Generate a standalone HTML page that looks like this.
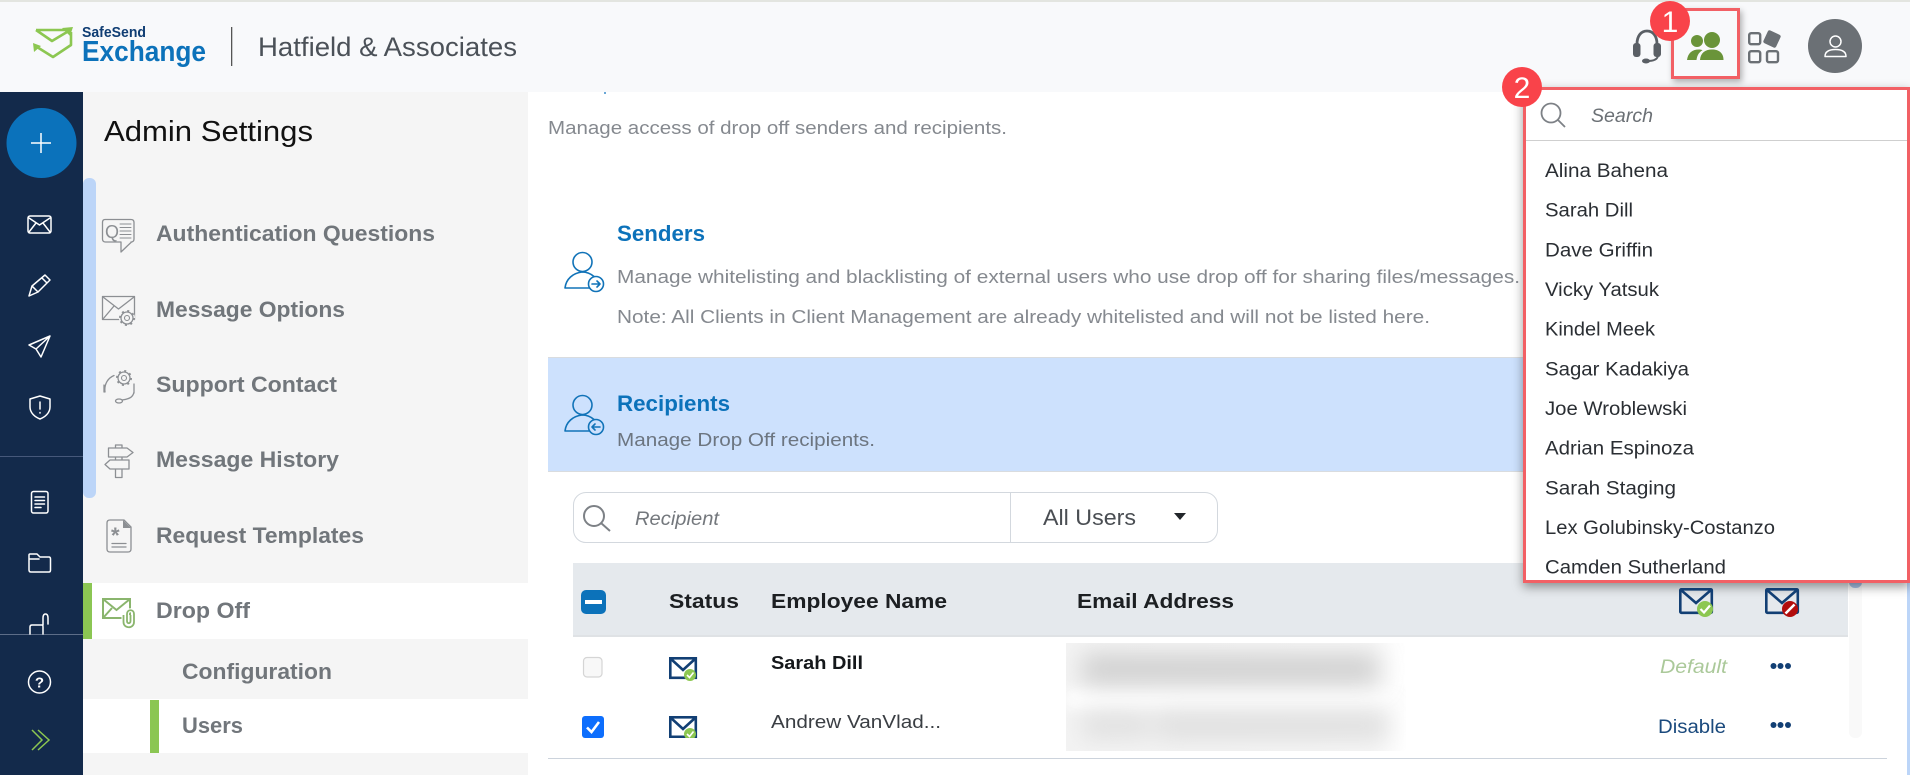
<!DOCTYPE html>
<html lang="en"><head><meta charset="utf-8"><title>Admin Settings</title>
<style>
html,body{margin:0;padding:0;width:1910px;height:775px;overflow:hidden;background:#fff}
.b{position:absolute;display:block}
svg{position:absolute;left:0;top:0}
text{font-family:"Liberation Sans",sans-serif;white-space:pre}
.nav{font-size:22px;font-weight:700;fill:#71767b}
.desc{font-size:18.5px;fill:#85898f}
.th{font-size:20.5px;font-weight:700;fill:#1c1f22}
.name{font-size:19px;fill:#2a2e33}
.ic{fill:none;stroke:#8c8f93;stroke-width:1.3;stroke-linejoin:round;stroke-linecap:round}
.w{fill:none;stroke:#fff;stroke-width:1.5;stroke-linejoin:round;stroke-linecap:round}
.bl{fill:none;stroke:#1173b8;stroke-width:1.6;stroke-linecap:round;stroke-linejoin:round}
.nv{fill:none;stroke:#123f74;stroke-width:2.6}
</style></head><body>
<div class="b" style="left:0;top:0;width:1910px;height:92px;background:#f8f9fb"></div>
<div class="b" style="left:0;top:0;width:1910px;height:2px;background:#e3e5e0"></div>
<div class="b" style="left:0;top:92px;width:83px;height:683px;background:#132a4b"></div>
<div class="b" style="left:83px;top:92px;width:445px;height:683px;background:#f5f5f5"></div>
<div class="b" style="left:83px;top:178px;width:13px;height:320px;background:#bcd5f8;border-radius:6px"></div>
<div class="b" style="left:83px;top:583px;width:445px;height:56px;background:#fff"></div>
<div class="b" style="left:83px;top:583px;width:9px;height:56px;background:#8bc653"></div>
<div class="b" style="left:83px;top:699px;width:445px;height:54px;background:#fff"></div>
<div class="b" style="left:150px;top:700px;width:9px;height:53px;background:#8bc653"></div>
<div class="b" style="left:0;top:456px;width:83px;height:1px;background:#46587a"></div>
<div class="b" style="left:0;top:634px;width:83px;height:1px;background:#5d6d88"></div>
<div class="b" style="left:548px;top:357px;width:980px;height:115px;box-sizing:border-box;background:#cde1fd;border-top:1px solid #d9dcdf;border-bottom:1px solid #d9dcdf"></div>
<div class="b" style="left:573px;top:492px;width:645px;height:51px;box-sizing:border-box;border:1.5px solid #d3d8de;border-radius:13px;background:#fff"></div>
<div class="b" style="left:1010px;top:492px;width:1px;height:51px;background:#d3d8de"></div>
<div class="b" style="left:573px;top:563px;width:1275px;height:74px;box-sizing:border-box;background:#e5e9ed;border-bottom:2px solid #dfe2e5"></div>
<div class="b" style="left:548px;top:758px;width:1339px;height:1px;background:#ccd3dc"></div>
<div class="b" style="left:1849px;top:570px;width:13px;height:168px;background:#f9f9f9;border-radius:6px"></div>
<div class="b" style="left:1849px;top:570px;width:13px;height:18px;background:#a9c3e8;border-radius:6px"></div>
<div class="b" style="left:1907px;top:575px;width:3px;height:200px;background:#bcd5f8"></div>
<div class="b" style="left:1523px;top:87px;width:387px;height:496px;box-sizing:border-box;background:#fff;border:3px solid #f26065;box-shadow:0 4px 10px rgba(0,0,0,.4)"></div>
<div class="b" style="left:1526px;top:140px;width:381px;height:1px;background:#cfcfcf"></div>
<div class="b" style="left:1671px;top:8px;width:69px;height:71px;box-sizing:border-box;border:3px solid #f26065;box-shadow:2px 3px 6px rgba(0,0,0,.3)"></div>

<svg width="1910" height="775" viewBox="0 0 1910 775" xmlns="http://www.w3.org/2000/svg">
<defs>
<filter id="bl" filterUnits="userSpaceOnUse" x="1000" y="600" width="480" height="175"><feGaussianBlur stdDeviation="12"/></filter>
<filter id="bl2" filterUnits="userSpaceOnUse" x="1000" y="600" width="480" height="175"><feGaussianBlur stdDeviation="5"/></filter>
<clipPath id="cb"><rect x="1066" y="643" width="340" height="108"/></clipPath>
<clipPath id="cr"><rect x="660" y="700" width="50" height="38"/></clipPath>
<linearGradient id="gb" x1="0" x2="1" y1="0" y2="0"><stop offset="0" stop-color="#f3f3f3"/><stop offset=".9" stop-color="#f7f7f7"/><stop offset="1" stop-color="#fff"/></linearGradient>
</defs>

<!-- logo -->
<g fill="none" stroke="#8cc751" stroke-width="2.600" stroke-linejoin="round">
<path d="M36 30H66M36 30L52 41L67 32"/><path d="M71 32V45L53 57L37 47"/></g>
<path d="M73 27L62 28L70 36Z" fill="#8cc751"/><path d="M33 43L34 52L41 46Z" fill="#8cc751"/>
<text x="82" y="37" font-size="15" font-weight="700" fill="#0f3d73" textLength="64" lengthAdjust="spacingAndGlyphs">SafeSend</text>
<text x="82" y="61" font-size="29" font-weight="700" fill="#0c72ba" textLength="124" lengthAdjust="spacingAndGlyphs">Exchange</text>
<rect x="231" y="27" width="1.300" height="39" fill="#555"/>
<text x="258" y="56" font-size="27" fill="#4b5158" textLength="259" lengthAdjust="spacingAndGlyphs">Hatfield &amp; Associates</text>

<!-- header icons -->
<g fill="none" stroke="#5a5f65" stroke-width="2.800"><path d="M1637 46V44C1637 36 1641 31 1647 31C1653 31 1657 36 1657 44V46"/><path d="M1658 55C1658 59 1654 61 1648 61" stroke-width="2"/></g>
<g fill="#5a5f65"><rect x="1633" y="43" width="7.500" height="14" rx="3"/><rect x="1653.500" y="43" width="7.500" height="14" rx="3"/><ellipse cx="1646" cy="61" rx="4" ry="2.500"/></g>
<g fill="#6a9439"><circle cx="1697" cy="41" r="6"/><circle cx="1712" cy="40" r="8"/><path d="M1687 60C1688 53 1692 49.500 1699 49.500C1700.500 49.500 1701.500 49.800 1702.500 50.200C1698.500 52.500 1697 56 1696.500 60Z"/><path d="M1700 60C1700.500 53 1705 49.500 1712 49.500C1719 49.500 1723.500 53 1723.500 60Z"/></g>
<g fill="none" stroke="#6b7075" stroke-width="2.400"><rect x="1749.200" y="33.200" width="11" height="11" rx="2"/><rect x="1749.200" y="51.200" width="11" height="11" rx="2"/><rect x="1767" y="51.200" width="11" height="11" rx="2"/></g>
<rect x="1765" y="32" width="14" height="14" rx="2" fill="#6b7075" transform="rotate(25 1772 39)"/>
<circle cx="1835" cy="46" r="27" fill="#6b7075"/>
<g class="w" stroke-width="1.600"><circle cx="1835.500" cy="41.500" r="5.500"/><path d="M1825 56.500C1825 51 1830 49.500 1835.500 49.500C1841 49.500 1846 51 1846 56.500Z"/></g>

<!-- sidebar -->
<circle cx="41.500" cy="143" r="35" fill="#0b72bb"/>
<path d="M31 143H51M41 133V153" stroke="#fff" stroke-width="1.500"/>
<g class="w">
<rect x="28" y="216" width="23" height="17" rx="2"/><path d="M29 218L39.500 225L50 218M29 232L36 223M50 232L43 223"/>
<path d="M29 296L32 286L45 275L50 280L38 292ZM32 286L38 292M42 278L47 283"/>
<path d="M29 345L50 336L41 357L36 349ZM36 349L50 336"/>
<path d="M40 396L30 399V407C30 413 35 417 40 419C45 417 50 413 50 407V399Z"/><path d="M40 402V409M40 412.500V413"/>
<rect x="31.500" y="491.500" width="16.500" height="21.500" rx="2"/><path d="M35 497H44.500M35 500.500H44.500M35 504H44.500M35 507.500H41"/>
<path d="M29 570V555Q29 554 30 554H37L40 557H49Q50.500 557 50.500 559V570Q50.500 572 49 572H31Q29 572 29 570ZM29 559H39"/>
<path d="M30 634V627Q30 625 32 625H42Q43 625 43 627V634M43 625V618Q43 614 45.500 614Q48 614 48 618V624"/>
<circle cx="39.500" cy="682" r="11"/>
</g>
<text x="39.500" y="687.500" font-size="15" font-weight="700" fill="#fff" text-anchor="middle">?</text>
<path d="M32 730L42 740L32 750M38 730L49 740L38 750" fill="none" stroke="#8cc751" stroke-width="1.500"/>

<!-- secondary nav -->
<text x="104" y="141" font-size="29" fill="#111" textLength="209" lengthAdjust="spacingAndGlyphs">Admin Settings</text>
<text class="nav" x="156" y="241" textLength="279" lengthAdjust="spacingAndGlyphs">Authentication Questions</text>
<text class="nav" x="156" y="317" textLength="189" lengthAdjust="spacingAndGlyphs">Message Options</text>
<text class="nav" x="156" y="392" textLength="181" lengthAdjust="spacingAndGlyphs">Support Contact</text>
<text class="nav" x="156" y="467" textLength="183" lengthAdjust="spacingAndGlyphs">Message History</text>
<text class="nav" x="156" y="543" textLength="208" lengthAdjust="spacingAndGlyphs">Request Templates</text>
<text class="nav" x="156" y="618" textLength="94" lengthAdjust="spacingAndGlyphs">Drop Off</text>
<text class="nav" x="182" y="679" textLength="150" lengthAdjust="spacingAndGlyphs">Configuration</text>
<text class="nav" x="182" y="733" textLength="61" lengthAdjust="spacingAndGlyphs">Users</text>

<!-- nav icons -->
<g class="ic">
<path d="M105 219.500H131Q134 219.500 134 222.500V239Q134 242 131 242H131.500L121 252V242H105.500Q102.500 242 102.500 239V222.500Q102.500 219.500 105 219.500Z"/>
<path d="M120 224H131M120 227.500H131M120 231H131M120 234.500H131M120 238H131" stroke-width="1"/>
<rect x="102.500" y="296.500" width="32" height="23"/><path d="M103 297L118.500 309L134 297M103 319L114 306"/>
<path d="M105 392C104 384 108 378 114 375.500M104 385V392M134 384V393M134 392C133 398 128 399 122 400"/><ellipse cx="119" cy="401" rx="3.500" ry="2"/>
<path d="M115.500 448V445H122V448M108.500 448H127L133 452.500L127 457H108.500ZM115.500 457V460M129 460H110L105 464.500L110 469H129ZM115.500 469V477.500H122V469M122 457V460"/>
<path d="M107 523Q107 520 110 520H124L131 527V549Q131 552 128 552H110Q107 552 107 549Z"/><path d="M112 543.500H126M112 547H126"/>
</g>
<text x="105" y="238" font-size="18" fill="#8c8f93">Q</text>
<circle cx="127" cy="318" r="8" fill="#f5f5f5"/>
<g fill="none" stroke="#8c8f93"><circle cx="127" cy="318" r="6" stroke-width="1.300"/><circle cx="127" cy="318" r="2.500" stroke-width="1.100"/><circle cx="127" cy="318" r="7" stroke-width="2" stroke-dasharray="2 3.500"/></g>
<g fill="none" stroke="#8c8f93"><circle cx="124" cy="378" r="6" stroke-width="1.300"/><circle cx="124" cy="378" r="2.500" stroke-width="1.100"/><circle cx="124" cy="378" r="7" stroke-width="2" stroke-dasharray="2 3.500"/></g>
<path d="M123 520L131 528H123Z" fill="#8c8f93"/>
<text x="111" y="543" font-size="22" font-weight="700" fill="#8c8f93">*</text>
<g fill="none" stroke="#8ab56d" stroke-width="2"><rect x="103" y="599" width="27" height="19"/><path d="M103 599L116.500 610L130 599M103 618L112 608"/></g>
<path d="M123.500 615V622C123.500 629 134 629 134 622V614C134 609 127 609 127 614V621C127 624 130.500 624 130.500 621V615" fill="none" stroke="#fff" stroke-width="4"/>
<path d="M123.500 615V622C123.500 629 134 629 134 622V614C134 609 127 609 127 614V621C127 624 130.500 624 130.500 621V615" fill="none" stroke="#8ab56d" stroke-width="1.800"/>

<!-- main -->
<rect x="604" y="92" width="2" height="2" fill="#6aa7d6"/>
<text class="desc" x="548" y="134" textLength="459" lengthAdjust="spacingAndGlyphs" style="font-size:18px">Manage access of drop off senders and recipients.</text>
<text x="617" y="241" font-size="22" font-weight="700" fill="#0c72ba" textLength="88" lengthAdjust="spacingAndGlyphs">Senders</text>
<text class="desc" x="617" y="283" textLength="903" lengthAdjust="spacingAndGlyphs">Manage whitelisting and blacklisting of external users who use drop off for sharing files/messages.</text>
<text class="desc" x="617" y="323" textLength="813" lengthAdjust="spacingAndGlyphs">Note: All Clients in Client Management are already whitelisted and will not be listed here.</text>
<text x="617" y="411" font-size="22" font-weight="700" fill="#0c72ba" textLength="113" lengthAdjust="spacingAndGlyphs">Recipients</text>
<text class="desc" x="617" y="446" textLength="258" lengthAdjust="spacingAndGlyphs" style="fill:#6c7580">Manage Drop Off recipients.</text>
<g class="bl"><circle cx="582.500" cy="262" r="9.500"/><path d="M565 288H590M565 288C566 279 573 273 582 272C586 272 590 273 594 276.500"/><circle cx="596" cy="284" r="7.500" fill="#fff"/><path d="M592 284H600M597 281L600 284L597 287"/></g>
<g class="bl" transform="translate(0 143)"><circle cx="582.500" cy="262" r="9.500"/><path d="M565 288H590M565 288C566 279 573 273 582 272C586 272 590 273 594 276.500"/><circle cx="596" cy="284" r="7.500" fill="#cde1fd"/><path d="M592 284H600M595 281L592 284L595 287"/></g>

<!-- filter row -->
<g fill="none" stroke="#7d8186" stroke-width="2"><circle cx="594" cy="516" r="10"/><path d="M601 523L610 531"/></g>
<text x="635" y="525" font-size="19" font-style="italic" fill="#74787d" textLength="84" lengthAdjust="spacingAndGlyphs">Recipient</text>
<text x="1043" y="525" font-size="22" fill="#4a4e53" textLength="93" lengthAdjust="spacingAndGlyphs">All Users</text>
<path d="M1174 513H1186L1180 520Z" fill="#22262a"/>

<!-- table -->
<rect x="581" y="590" width="25" height="24" rx="5" fill="#0c72ba"/><rect x="585" y="600" width="17" height="4" fill="#fff"/>
<text class="th" x="669" y="608" textLength="70" lengthAdjust="spacingAndGlyphs">Status</text>
<text class="th" x="771" y="608" textLength="176" lengthAdjust="spacingAndGlyphs">Employee Name</text>
<text class="th" x="1077" y="608" textLength="157" lengthAdjust="spacingAndGlyphs">Email Address</text>
<g class="nv"><rect x="1680.300" y="589.300" width="31.500" height="23.500" rx="1"/><path d="M1681 590L1696 603L1711 590"/></g>
<circle cx="1705" cy="609" r="8" fill="#8cc751"/><path d="M1700.500 609L1704 612.500L1710 605.500" fill="none" stroke="#fff" stroke-width="2.200"/>
<g class="nv"><rect x="1766.300" y="589.300" width="31.500" height="23.500" rx="1"/><path d="M1767 590L1782 603L1797 590"/></g>
<circle cx="1790" cy="609" r="8" fill="#b20d0d"/><path d="M1785.500 613.500L1794.500 604.500" stroke="#fff" stroke-width="2.600"/>

<rect x="583.500" y="657.500" width="18.500" height="19.500" rx="3.500" fill="#f8f8f8" stroke="#d5d5d5" stroke-width="1.200"/>
<rect x="582" y="716" width="22" height="22" rx="3" fill="#0d6efd"/><path d="M587 727.500L591.500 732L599 722" fill="none" stroke="#fff" stroke-width="2.600"/>
<g class="nv"><rect x="670.300" y="658.300" width="25.500" height="19.500"/><path d="M671 659L683 670L695 659"/></g>
<circle cx="690" cy="675" r="6" fill="#8cc751"/><path d="M687 675L689.500 677.500L693.500 672.500" fill="none" stroke="#fff" stroke-width="1.600"/>
<g clip-path="url(#cr)"><g class="nv"><rect x="670.300" y="717.300" width="25.500" height="19.500"/><path d="M671 718L683 729L695 718"/></g>
<circle cx="690" cy="734" r="6" fill="#8cc751"/><path d="M687 734L689.500 736.500L693.500 731.500" fill="none" stroke="#fff" stroke-width="1.600"/></g>
<text x="771" y="669" font-size="18.500" font-weight="700" fill="#15181b" textLength="92" lengthAdjust="spacingAndGlyphs">Sarah Dill</text>
<text x="771" y="728" font-size="18.500" fill="#3a3e43" textLength="170" lengthAdjust="spacingAndGlyphs">Andrew VanVlad...</text>
<g clip-path="url(#cb)">
<rect x="1066" y="643" width="340" height="108" fill="url(#gb)"/>
<rect x="1066" y="688" width="340" height="22" fill="#fdfdfd" filter="url(#bl2)"/>
<path d="M1082 654H1378V684H1082Z" fill="#d0d0d0" filter="url(#bl)"/>
<path d="M1082 713H1150V739H1082ZM1156 711H1388V741H1156Z" fill="#e0e0e0" filter="url(#bl)"/>
</g>
<text x="1660" y="673" font-size="19" font-style="italic" fill="#abc99a" textLength="67" lengthAdjust="spacingAndGlyphs">Default</text>
<text x="1658" y="733" font-size="19" fill="#1b4a7d" textLength="68" lengthAdjust="spacingAndGlyphs">Disable</text>
<g fill="#123f74"><circle cx="1773.500" cy="666" r="3"/><circle cx="1780.500" cy="666" r="3"/><circle cx="1788" cy="666" r="3"/><circle cx="1773.500" cy="725" r="3"/><circle cx="1780.500" cy="725" r="3"/><circle cx="1788" cy="725" r="3"/></g>

<!-- popup -->
<g fill="none" stroke="#7d8186" stroke-width="1.800"><circle cx="1551" cy="113" r="9.500"/><path d="M1558 120L1565 127"/></g>
<text x="1591" y="122" font-size="19" font-style="italic" fill="#6b7075" textLength="62" lengthAdjust="spacingAndGlyphs">Search</text>
<text class="name" x="1545" y="177" textLength="123" lengthAdjust="spacingAndGlyphs">Alina Bahena</text>
<text class="name" x="1545" y="216.700" textLength="88" lengthAdjust="spacingAndGlyphs">Sarah Dill</text>
<text class="name" x="1545" y="256.300" textLength="108" lengthAdjust="spacingAndGlyphs">Dave Griffin</text>
<text class="name" x="1545" y="296" textLength="114" lengthAdjust="spacingAndGlyphs">Vicky Yatsuk</text>
<text class="name" x="1545" y="335.700" textLength="110" lengthAdjust="spacingAndGlyphs">Kindel Meek</text>
<text class="name" x="1545" y="375.300" textLength="144" lengthAdjust="spacingAndGlyphs">Sagar Kadakiya</text>
<text class="name" x="1545" y="415" textLength="142" lengthAdjust="spacingAndGlyphs">Joe Wroblewski</text>
<text class="name" x="1545" y="454.700" textLength="149" lengthAdjust="spacingAndGlyphs">Adrian Espinoza</text>
<text class="name" x="1545" y="494.300" textLength="131" lengthAdjust="spacingAndGlyphs">Sarah Staging</text>
<text class="name" x="1545" y="534" textLength="230" lengthAdjust="spacingAndGlyphs">Lex Golubinsky-Costanzo</text>
<text class="name" x="1545" y="573.700" textLength="181" lengthAdjust="spacingAndGlyphs">Camden Sutherland</text>

<!-- callouts -->
<circle cx="1670" cy="21" r="20" fill="#f9434a"/>
<text x="1670" y="32" font-size="30" fill="#fff" text-anchor="middle">1</text>
<circle cx="1522" cy="87" r="20" fill="#f9434a"/>
<text x="1522" y="98" font-size="30" fill="#fff" text-anchor="middle">2</text>
</svg>
</body></html>
